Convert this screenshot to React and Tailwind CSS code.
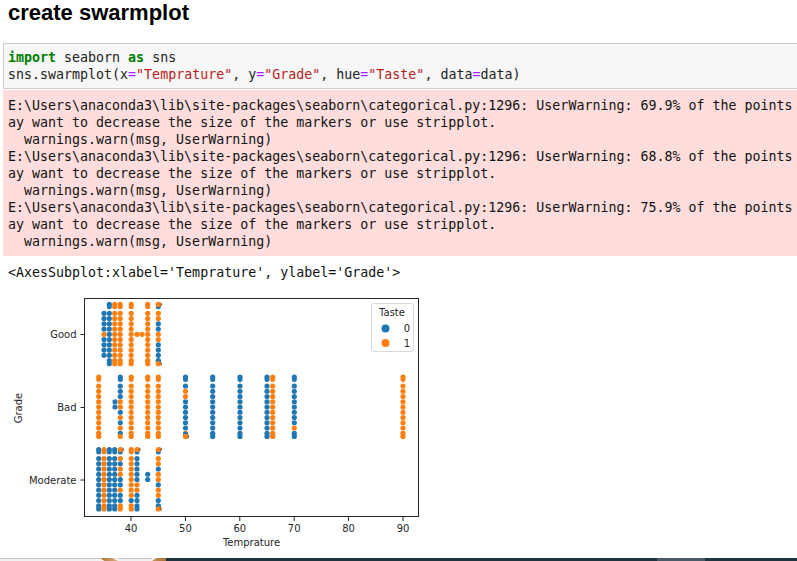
const BLUE = "#1f77b4";
const ORANGE = "#ff7f0e";
const STEP = 5.25;

// b = blue, o = orange, m = orange sitting on a blue dot, . = nothing
// slots: top end, k -4..4, k 5, bottom end
const ALL_O = "oooooooooooo";
const ALL_B = "bbbbbbbbbbbb";

const swarms = [
  {
    y: 334.3,
    cols: [
      [104, ".bbbbobbbb.."],
      [109.3, ALL_B],
      [114.7, ALL_O],
      [120.2, ALL_O],
      [131.2, ALL_O],
      [137, ".....o......"],
      [142, ".....o......"],
      [147.7, ALL_O],
      [158.3, "moobboobbbbm"],
    ],
  },
  {
    y: 407,
    cols: [
      [98.7, ALL_O],
      [115, "....bb......"],
      [120.3, "bbbbooboboBo".toLowerCase()],
      [131.2, ALL_O],
      [147.7, ALL_O],
      [158.3, ALL_O],
      [185.5, "bboobbbbbbom"],
      [212.7, ALL_B],
      [240, ALL_B],
      [267, ALL_B],
      [272.7, ALL_O],
      [294.3, "bbbbbbbbbobb"],
      [403, ALL_O],
    ],
  },
  {
    y: 479.5,
    cols: [
      [98.7, ALL_B],
      [104, ALL_O],
      [109.3, ALL_B],
      [114.7, ALL_B],
      [120.3, "moboobbobboo"],
      [131.2, "ooooooooobom".replace("m", "o")],
      [137, "mbbbbboobbbb"],
      [147.7, "....bb......"],
      [158.3, "moobooboobbm"],
    ],
  },
];

function Column({ x, y, pattern }) {
  const dots = [];
  [...pattern].forEach((c, i) => {
    if (c === ".") return;
    const k = i === 0 ? -5.7 : i === 11 ? 5.6 : i - 5;
    const cy = y + k * STEP;
    if (c === "m") {
      dots.push(<circle key={i + "g"} cx={x + 1.6} cy={cy} r="2" fill="#555" />);
      dots.push(<circle key={i + "u"} cx={x} cy={cy + (i === 0 ? 2.4 : -2.4)} r="2.5" fill={BLUE} />);
    }
    // the two ends of a swarm pile up and look fatter
    if (i === 0 && c !== "m") {
      dots.push(<circle key={i + "e"} cx={x} cy={cy + 2.4} r="2.5" fill={c === "b" ? BLUE : ORANGE} />);
    }
    dots.push(<circle key={i} cx={x} cy={cy} r="2.6" fill={c === "b" ? BLUE : ORANGE} />);
  });
  return <g>{dots}</g>;
}

function SwarmPlot() {
  const xTicks = [
    [131, "40"],
    [185.4, "50"],
    [239.8, "60"],
    [294.2, "70"],
    [348.6, "80"],
    [403, "90"],
  ];
  const yTicks = [
    [334.5, "Good"],
    [407.5, "Bad"],
    [480, "Moderate"],
  ];

  return (
    <svg width="430" height="268" viewBox="0 290 430 268" className="block" style={{ fontFamily: "'DejaVu Sans', sans-serif" }}>
      {swarms.map((s) =>
        s.cols.map(([x, pattern]) => <Column key={s.y + "-" + x} x={x} y={s.y} pattern={pattern} />)
      )}
      <rect x="84.5" y="298.5" width="334" height="218" fill="none" stroke="#262626" strokeWidth="1" />

      {xTicks.map(([x, label]) => (
        <g key={label}>
          <line x1={x} x2={x} y1="517" y2="521" stroke="#262626" />
          <text x={x} y="532" textAnchor="middle" fontSize="10" fill="#262626">{label}</text>
        </g>
      ))}
      {yTicks.map(([y, label]) => (
        <g key={label}>
          <line x1="80.5" x2="84" y1={y} y2={y} stroke="#262626" />
          <text x="76.5" y={y + 3.5} textAnchor="end" fontSize="10" fill="#262626">{label}</text>
        </g>
      ))}
      <text x="251.5" y="546" textAnchor="middle" fontSize="10" fill="#262626">Temprature</text>
      <text x="22" y="408" textAnchor="middle" fontSize="10" fill="#262626" transform="rotate(-90 22 408)">Grade</text>

      {/* legend */}
      <rect x="371.5" y="303.5" width="42" height="48" rx="2" fill="#fff" stroke="#d9d9d9" />
      <text x="392" y="315.5" textAnchor="middle" fontSize="10" fill="#262626">Taste</text>
      <circle cx="385.5" cy="328.5" r="4" fill={BLUE} />
      <circle cx="385.5" cy="343" r="4" fill={ORANGE} />
      <text x="410" y="331.5" textAnchor="end" fontSize="10" fill="#262626">0</text>
      <text x="410" y="346.5" textAnchor="end" fontSize="10" fill="#262626">1</text>
    </svg>
  );
}

function WarningLines({ percent }) {
  return (
    <>
      <div>{`E:\\Users\\anaconda3\\lib\\site-packages\\seaborn\\categorical.py:1296: UserWarning: ${percent}% of the points`}</div>
      <div>ay want to decrease the size of the markers or use stripplot.</div>
      <div>{"  warnings.warn(msg, UserWarning)"}</div>
    </>
  );
}

export default function App() {
  const kw = "font-bold text-[#008000]";
  const op = "text-[#aa22ff]";
  const str = "text-[#ba2121]";

  return (
    <div className="w-[797px] h-[561px] overflow-hidden bg-white flex flex-col">
      <h2 className="pl-2 h-[43px] text-[22px] leading-[26px] font-bold text-black font-['Liberation_Sans',sans-serif]">
        create swarmplot
      </h2>

      <div className="ml-[3px] font-['DejaVu_Sans_Mono',monospace] text-[13.3px] leading-[17px] whitespace-pre">
        <div className="h-[46px] pl-[4px] pt-[5px] bg-[#f7f7f7] border border-[#cfcfcf] border-r-0 text-[#222]">
          <div>
            <span className={kw}>import</span> seaborn <span className={kw}>as</span> sns
          </div>
          <div>
            sns.swarmplot(x<span className={op}>=</span><span className={str}>"Temprature"</span>, y<span className={op}>=</span><span className={str}>"Grade"</span>, hue<span className={op}>=</span><span className={str}>"Taste"</span>, data<span className={op}>=</span>data)
          </div>
        </div>
        <div className="mt-px h-[166px] pl-[5px] pt-[7px] bg-[#ffdddd] text-[#111] overflow-hidden">
          <WarningLines percent="69.9" />
          <WarningLines percent="68.8" />
          <WarningLines percent="75.9" />
        </div>
        <div className="h-[34px] pl-[5px] pt-[8px] text-[#111]">{"<AxesSubplot:xlabel='Temprature', ylabel='Grade'>"}</div>
      </div>

      <SwarmPlot />

      {/* strip of the next page section, cut off by the window */}
      <div className="flex h-[3px] shrink-0 bg-[#f1f1f1]">
        <div className="w-[100px] border-t border-[#c4c4c4]" />
        <div className="w-[18px] bg-gradient-to-r from-[#a86f34] to-[#dcb184] [clip-path:polygon(0_0,70%_0,100%_100%,25%_100%)]" />
        <div className="w-[34px] border-t border-[#c4c4c4]" />
        <div className="w-[14px] bg-gradient-to-r from-[#c9955e] to-[#a86f34] [clip-path:polygon(30%_0,100%_0,100%_100%,0_100%)]" />
        <div className="w-[491px] bg-[#1e3440]" />
        <div className="w-[48px] bg-[#4b5b66]" />
        <div className="flex-1 bg-[#1e3440]" />
      </div>
    </div>
  );
}
